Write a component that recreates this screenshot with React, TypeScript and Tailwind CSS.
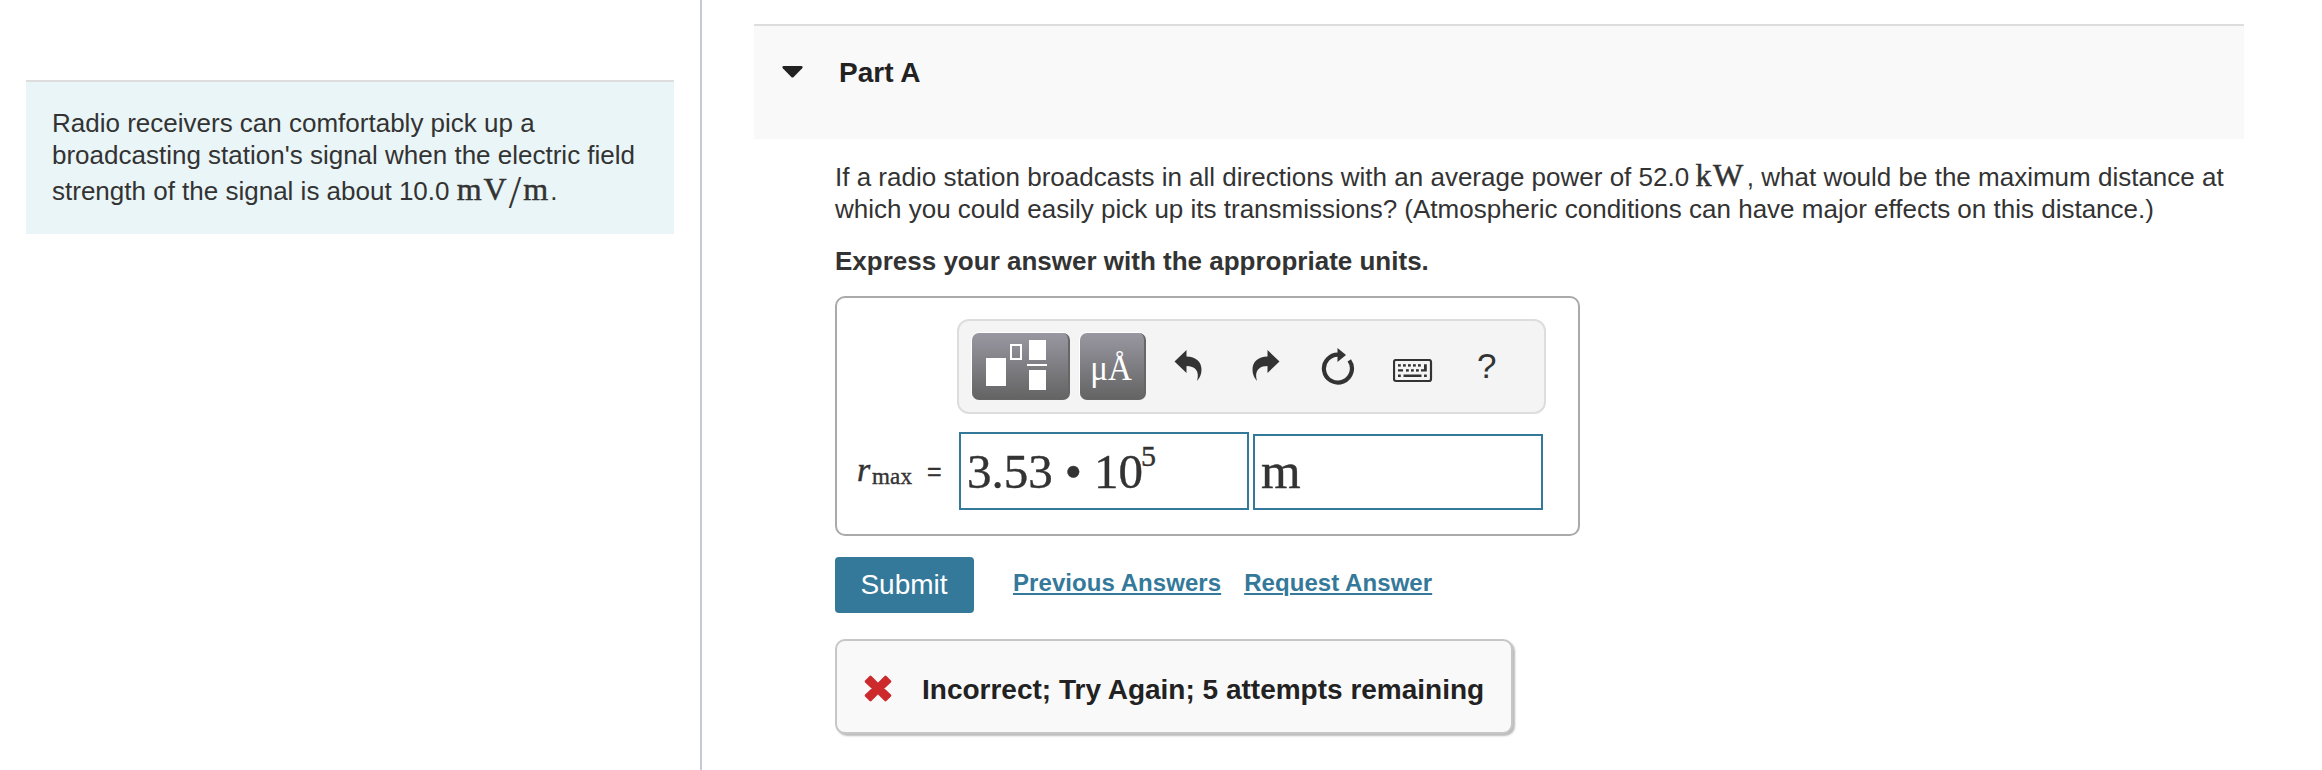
import type { ReactNode } from "react";

const TEXT = "font-['Liberation_Sans',Arial,sans-serif]";
const MATH = "font-['Liberation_Serif','Times_New_Roman',serif]";

function Line({ children, className = "" }: { children: ReactNode; className?: string }) {
    return <div className={`h-8 whitespace-nowrap text-[26px] leading-8 ${className}`}>{children}</div>;
}

function KeyboardIcon() {
    return (
        <svg width="40" height="24" viewBox="0 0 40 24" fill="#333">
            <rect x="1" y="1" width="37" height="21" rx="2" fill="none" stroke="#333" strokeWidth="2.2" />
            {[5, 10, 15, 20, 25].map(x => <rect key={x} x={x} y="5.2" width="2.8" height="2.4" />)}
            {[13, 18, 23].map(x => <rect key={x} x={x} y="10.2" width="2.8" height="2.4" />)}
            <path d="M5 10.2h5v2.4H5zM31 5.2h2.8v7.4H28v-2.4h3zM5 15.5h2.8v2.4H5zM10.5 15.5h18v2.4h-18zM31 15.5h2.8v2.4H31z" />
        </svg>
    );
}

function Toolbar() {
    return (
        <div className="flex h-[95px] w-[589px] rounded-[12px] border-2 border-[#ddd] bg-[#f4f4f4] pt-[12px] pl-[13px]">
            {/* Templates */}
            <button className="h-[67px] w-[98px] rounded-[7px] border-r-2 border-b border-[#666] bg-linear-to-b from-[#9998a2] to-[#646464] shadow-[0_-1px_0_#fff,-1px_0_0_#fff]">
                <svg width="96" height="66" viewBox="0 0 96 66" fill="#fff">
                    <rect x="14" y="25" width="20" height="28" />
                    <rect x="39" y="12" width="10" height="14" fill="none" stroke="#fff" strokeWidth="2" />
                    <rect x="57" y="7" width="17" height="20" />
                    <rect x="55" y="31" width="20" height="2" />
                    <rect x="57" y="37" width="17" height="20" />
                </svg>
            </button>
            {/* Units */}
            <button className={`ml-[10px] h-[67px] w-[66px] rounded-[7px] border-r-2 border-b border-[#666] bg-linear-to-b from-[#9998a2] to-[#646464] pt-[6px] pr-[2px] text-[33px] leading-[60px] text-white shadow-[0_-1px_0_#fff,-1px_0_0_#fff] ${MATH}`}>
                <span className="inline-block origin-[50%_41px] scale-y-108">μÅ</span>
            </button>
            <svg className="mt-[16px] ml-[28px]" width="29" height="34" viewBox="0 0 29 34" fill="#333">
                <path d="M0.5 12.5 12.5 1V7.5C22 7.5 27.5 13 27.5 20.5Q27.5 27 23 32C26 22 21 17 12.5 17V24Z" />
            </svg>
            <svg className="mt-[16px] ml-[48px]" width="29" height="34" viewBox="0 0 29 34" fill="#333">
                <path d="M28.5 12.5 16.5 1V7.5C7 7.5 1.5 13 1.5 20.5Q1.5 27 6 32C3 22 8 17 16.5 17V24Z" />
            </svg>
            <svg className="mt-[14px] ml-[41px]" width="34" height="38" viewBox="0 0 34 38">
                <path d="M18 7.6A14 14 0 1 0 28.3 13.4" fill="none" stroke="#333" strokeWidth="4.2" />
                <path d="M16.5 1v14L25 8Z" fill="#333" />
            </svg>
            <div className="mt-[26px] ml-[38px]"><KeyboardIcon /></div>
            <div className="mt-[11px] ml-[44px] text-[35px] leading-[44px] text-[#333]">?</div>
        </div>
    );
}

function AnswerBox() {
    return (
        <div className="mt-[19px] ml-[81px] h-[240px] w-[745px] rounded-[10px] border-2 border-[#aaa] pt-[21px]">
            <div className="pl-[120px]"><Toolbar /></div>
            <div className={`mt-[18px] flex text-[#333] ${MATH}`}>
                <div className="flex w-[122px] pl-[20px]">
                    <span className="mt-[18px] w-[15px] text-[34px] leading-[40px] italic [-webkit-text-stroke:0.5px]">r</span>
                    <span className="mt-[31px] w-[55px] text-[23px] leading-[28px] tracking-[0.2px] [-webkit-text-stroke:0.4px]">max</span>
                    <span className={`mt-[24px] text-[25px] leading-[30px] [-webkit-text-stroke:0.4px] ${TEXT}`}>=</span>
                </div>
                <div className="flex h-[78px] w-[290px] border-2 border-[#34799a] pl-[6px] text-[49px] leading-[76px] [-webkit-text-stroke:0.4px]">
                    <span>3.53</span>
                    <span className="ml-[12px]">•</span>
                    <span className="ml-[12px]">10</span>
                    <span className="-mt-[16px] -ml-[2px] text-[30px]">5</span>
                </div>
                <div className="mt-[2px] ml-[4px] h-[76px] w-[290px] border-2 border-[#34799a] pl-[6px] text-[51px] leading-[71px] [-webkit-text-stroke:0.4px]">m</div>
            </div>
        </div>
    );
}

export default function App() {
    return (
        <div className={`flex h-[770px] w-[2322px] overflow-hidden bg-white text-[#333] ${TEXT}`}>
            <aside className="w-[702px] border-r-2 border-[#c1cad9] pt-[80px] pl-[26px]">
                <div className="h-[154px] w-[648px] border-t-2 border-[#ddd] bg-[#eaf5f7] pt-[25px] pl-[26px]">
                    <Line>Radio receivers can comfortably pick up a</Line>
                    <Line>broadcasting station's signal when the electric field</Line>
                    <Line className="mt-[4px]">
                        strength of the signal is about 10.0{" "}
                        <span className={`text-[32px] leading-[24px] tracking-[1.9px] [-webkit-text-stroke:0.5px] ${MATH}`}>
                            mV<span className="mx-[2px] inline-block translate-y-[3px] scale-x-140 scale-y-145 [-webkit-text-stroke:0px]">/</span>m
                        </span>.
                    </Line>
                </div>
            </aside>

            <main className="w-[1542px] pt-[24px] pl-[52px]">
                <div className="flex h-[115px] w-[1490px] border-t-2 border-[#ddd] bg-[#f9f9f9] text-[#222]">
                    <svg className="mt-[40px] ml-[28px]" width="21" height="12" viewBox="0 0 21 12">
                        <path d="M1.5 0h18q2 .6.7 2.2L11.7 11q-1.2 1.2-2.4 0L.8 2.2Q-.5.6 1.5 0Z" fill="#222" />
                    </svg>
                    <h2 className="mt-[31px] ml-[36px] text-[28px] leading-[32px] font-bold">Part A</h2>
                </div>

                <div className="mt-[22px] pl-[81px]">
                    <Line>
                        If a radio station broadcasts in all directions with an average power of 52.0{" "}
                        <span className={`-ml-px text-[32px] leading-[24px] tracking-[1.6px] [-webkit-text-stroke:0.5px] ${MATH}`}>kW</span>
                        <span className="ml-[2px]">, what would be the maximum distance at</span>
                    </Line>
                    <Line>which you could easily pick up its transmissions? (Atmospheric conditions can have major effects on this distance.)</Line>
                    <Line className="mt-[20px] font-bold">Express your answer with the appropriate units.</Line>
                </div>

                <AnswerBox />

                <div className="mt-[21px] flex pl-[81px]">
                    <button className="h-[56px] w-[139px] rounded-[4px] bg-[#34799a] pr-px text-[28px] text-white">Submit</button>
                    <a className="mt-[10px] ml-[39px] text-[24px] leading-[32px] font-bold tracking-[0.06px] text-[#34799a] underline decoration-2 underline-offset-2">Previous Answers</a>
                    <a className="mt-[10px] ml-[23px] text-[24px] leading-[32px] font-bold tracking-[0.06px] text-[#34799a] underline decoration-2 underline-offset-2">Request Answer</a>
                </div>

                <div className="mt-[26px] ml-[81px] flex h-[95px] w-[678px] rounded-[10px] border-2 border-[#c6c6c6] bg-[#f9f9f9] text-[#222] shadow-[2px_2px_2px_#bbb]">
                    <svg className="mt-[34px] ml-[27px]" width="28" height="27" viewBox="0 0 28 27">
                        <path
                            d="M6.5 2 14 9.5 21.5 2 26 6.5 18.5 13.5 26 20.5 21.5 25 14 17.5 6.5 25 2 20.5 9.5 13.5 2 6.5Z"
                            fill="#cc2a2d"
                            stroke="#cc2a2d"
                            strokeWidth="2.6"
                            strokeLinejoin="round"
                        />
                    </svg>
                    <span className="mt-[33px] ml-[30px] text-[28px] leading-[32px] font-bold whitespace-nowrap">Incorrect; Try Again; 5 attempts remaining</span>
                </div>
            </main>
        </div>
    );
}
